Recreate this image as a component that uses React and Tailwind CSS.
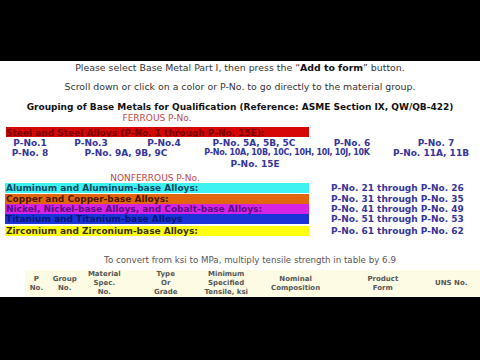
import React from 'react';

const ferrousRow1 = [
  { label: 'P-No.1', w: 'w-[60px]' },
  { label: 'P-No.3', w: 'w-[62px]' },
  { label: 'P-No.4', w: 'w-[84px]' },
  { label: 'P-No. 5A, 5B, 5C', w: 'w-[96px]' },
  { label: 'P-No. 6', w: 'w-[100px]' },
  { label: 'P-No. 7', w: 'w-[68px]' },
];

const ferrousRow2 = [
  { label: 'P-No. 8', w: 'w-[60px]', t: '' },
  { label: 'P-No. 9A, 9B, 9C', w: 'w-[132px]', t: '' },
  { label: 'P-No. 10A, 10B, 10C, 10H, 10I, 10J, 10K', w: 'w-[190px]', t: 'text-[8px] tracking-[-0.3px]' },
  { label: 'P-No. 11A, 11B', w: 'w-[98px]', t: '' },
];

const nonferrous = [
  { name: 'Aluminum and Aluminum-base Alloys:', range: 'P-No. 21 through P-No. 26', bar: 'bg-[#3ef2f2] text-[#0a4860]', gap: '' },
  { name: 'Copper and Copper-base Alloys:', range: 'P-No. 31 through P-No. 35', bar: 'bg-[#e2660e] text-[#4a1600]', gap: 'mt-px' },
  { name: 'Nickel, Nickel-base Alloys, and Cobalt-base Alloys:', range: 'P-No. 41 through P-No. 49', bar: 'bg-[#d524e4] text-[#5c0a86]', gap: '' },
  { name: 'Titanium and Titanium-base Alloys', range: 'P-No. 51 through P-No. 53', bar: 'bg-[#1a34d8] text-[#0a1478]', gap: '' },
  { name: 'Zirconium and Zirconium-base Alloys:', range: 'P-No. 61 through P-No. 62', bar: 'bg-[#ffff10] text-[#3a3000]', gap: 'mt-[2px]' },
];

const headers = [
  { lines: ['P', 'No.'], w: 'w-[23px]' },
  { lines: ['Group', 'No.'], w: 'w-[34px]' },
  { lines: ['Material', 'Spec.', 'No.'], w: 'w-[46px]' },
  { lines: ['Type', 'Or', 'Grade'], w: 'w-[78px]' },
  { lines: ['Minimum', 'Specified', 'Tensile, ksi'], w: 'w-[44px]' },
  { lines: ['Nominal', 'Composition'], w: 'w-[96px]' },
  { lines: ['Product', 'Form'], w: 'w-[80px]' },
  { lines: ['UNS No.'], w: 'w-[58px]' },
];

export default function App() {
  return (
    <div className="w-[480px] h-[360px] bg-black flex flex-col font-['DejaVu_Sans',Verdana,sans-serif]">
      <div className="h-[61px] shrink-0" />
      <div className="h-[236px] shrink-0 bg-white overflow-hidden flex flex-col">
        <p className="mt-px h-[12px] leading-[12px] text-center text-[9.4px] text-[#333]">
          Please select Base Metal Part I, then press the “<b className="text-[#111]">Add to form</b>” button.
        </p>
        <p className="mt-[7px] h-[12px] leading-[12px] text-center text-[9.4px] text-[#333]">
          Scroll down or click on a color or P-No. to go directly to the material group.
        </p>
        <h1 className="mt-[8px] h-[12px] leading-[12px] text-center text-[9px] font-bold text-[#111]">
          Grouping of Base Metals for Qualification (Reference: ASME Section IX, QW/QB-422)
        </h1>
        <p className="h-[10px] leading-[10px] w-[314px] text-center text-[9px] text-[#c04848]">FERROUS P-No.</p>

        <div className="mt-[4px] ml-[6px] w-[303px] h-[13px] bg-[#d40606] text-[#7a0000] font-bold text-[9px] leading-[13px] whitespace-nowrap overflow-hidden">
          Steel and Steel Alloys (P-No. 1 through P-No. 15E):
        </div>

        <div className="mt-px flex text-[9px] font-bold text-[#35359a] leading-[10px]">
          {ferrousRow1.map((c) => (
            <span key={c.label} className={`${c.w} text-center whitespace-nowrap`}>{c.label}</span>
          ))}
        </div>
        <div className="flex text-[9px] font-bold text-[#35359a] leading-[10px]">
          {ferrousRow2.map((c) => (
            <span key={c.label} className={`${c.w} text-center whitespace-nowrap ${c.t}`}>{c.label}</span>
          ))}
        </div>
        <div className="flex mt-px text-[9px] font-bold text-[#35359a] leading-[10px]">
          <span className="w-[206px]" />
          <span className="w-[98px] text-center">P-No. 15E</span>
        </div>

        <p className="mt-[4px] h-[10px] leading-[10px] w-[310px] text-center text-[9px] text-[#c04848]">NONFERROUS P-No.</p>

        <div className="flex flex-col">
          {nonferrous.map((r) => (
            <div key={r.name} className={`flex items-center ${r.gap}`}>
              <div className={`ml-[5px] w-[304px] h-[10px] leading-[10px] text-[9px] font-bold whitespace-nowrap overflow-hidden pl-px ${r.bar}`}>
                {r.name}
              </div>
              <div className="ml-[22px] text-[9px] font-bold leading-[10px] text-[#35359a] whitespace-nowrap">{r.range}</div>
            </div>
          ))}
        </div>

        <p className="mt-[18px] ml-[20px] h-[12px] leading-[12px] text-center text-[8.7px] text-[#555]">
          To convert from ksi to MPa, multiply tensile strength in table by 6.9
        </p>

        <div className="mt-[4px] ml-[25px] flex bg-[#fdfbe4] h-[32px] items-center text-[7px] font-bold text-[#555] leading-[9px]">
          {headers.map((h) => (
            <div key={h.lines.join()} className={`${h.w} flex flex-col items-center text-center whitespace-nowrap`}>
              {h.lines.map((l) => (
                <span key={l}>{l}</span>
              ))}
            </div>
          ))}
        </div>
      </div>
    </div>
  );
}
